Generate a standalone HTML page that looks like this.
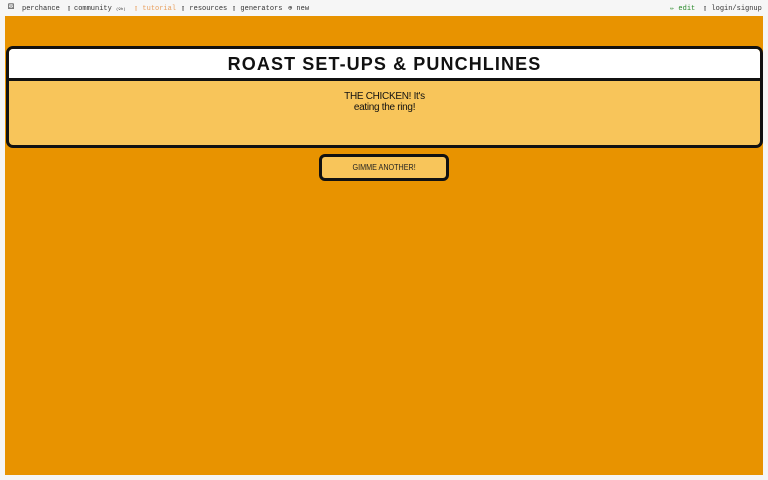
<!DOCTYPE html>
<html><head><meta charset="utf-8"><style>
html,body{margin:0;padding:0;width:768px;height:480px;overflow:hidden;background:#f5f5f5;font-family:"Liberation Sans",sans-serif}
.top{position:absolute;left:0;top:0;width:768px;height:16px;background:#f6f6f6;font-family:"Liberation Mono",monospace;font-size:7px;color:#333;line-height:16px}
.top span{position:absolute;top:1px;white-space:nowrap}
.main{position:absolute;left:5px;top:16px;width:758px;height:459px;background:#e89300}
.card{position:absolute;left:1px;top:30px;width:751px;height:96px;border:3px solid #111;border-radius:7px;background:#f8c55a;overflow:hidden}
.title{height:29px;background:#fff;border-bottom:3px solid #111;text-align:center;font-weight:bold;font-size:18px;letter-spacing:1.1px;line-height:31px;color:#111}
.txt{text-align:center;font-size:10px;line-height:11px;margin-top:10px;color:#111;letter-spacing:-0.3px}
.btn{position:absolute;left:314px;top:138px;width:124px;height:21px;border:3px solid #111;border-radius:6px;background:#f8c55a;text-align:center;font-size:8px;line-height:21px;color:#222}
.btn span{display:inline-block;transform:scaleX(0.9)}
</style></head><body>
<div class="top">
<span style="left:8px;font-size:10px;top:0">⚄</span>
<span style="left:22px">perchance</span>
<span style="left:67px">▯</span>
<span style="left:74px">community <small style="font-size:4px">(9h)</small></span>
<span style="left:134px;color:#e8a060">▯ tutorial</span>
<span style="left:181px">▯ resources</span>
<span style="left:232px">▯ generators</span>
<span style="left:288px">⊕ new</span>
<span style="left:670px;color:#2a8a2a">✏ edit</span>
<span style="left:703px">▯ login/signup</span>
</div>
<div class="main">
<div class="card"><div class="title">ROAST SET-UPS &amp; PUNCHLINES</div>
<div class="txt">THE CHICKEN! It's<br>eating the ring!</div></div>
<div class="btn"><span>GIMME ANOTHER!</span></div>
</div>
</body></html>
